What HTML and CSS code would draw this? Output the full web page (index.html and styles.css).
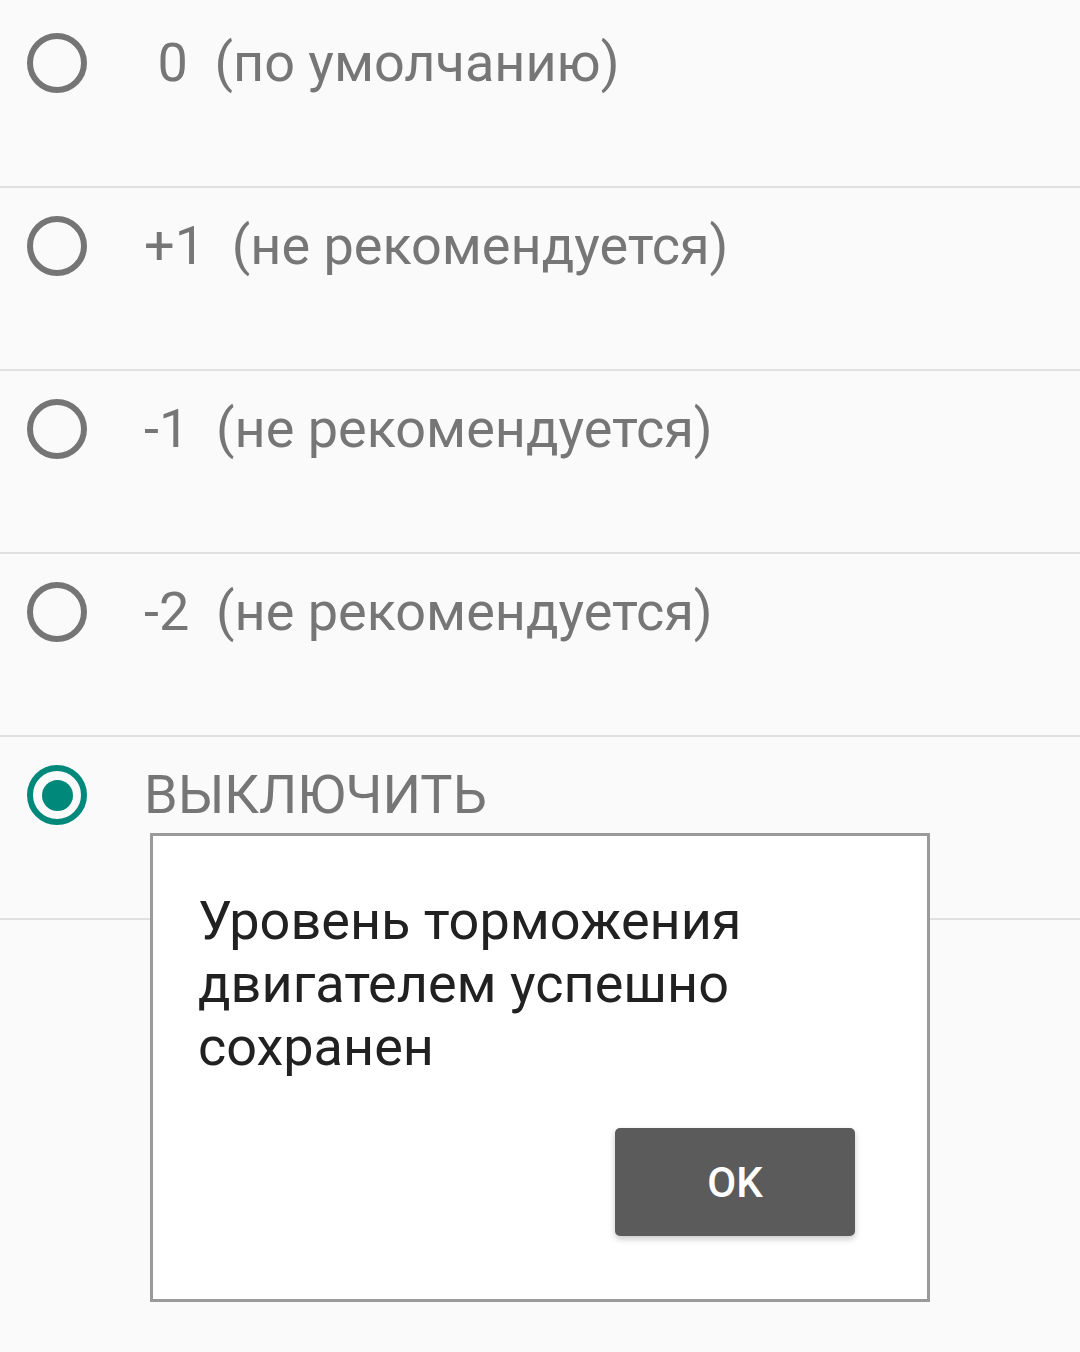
FILE: index.html
```html
<!DOCTYPE html>
<html lang="ru">
<head>
<meta charset="utf-8">
<link rel="stylesheet" href="styles.css">
</head>
<body>
<ul class="options">
  <li class="option">
    <span class="radio"></span>
    <span class="label"> 0  (по умолчанию)</span>
  </li>
  <li class="option">
    <span class="radio"></span>
    <span class="label">+1  (не рекомендуется)</span>
  </li>
  <li class="option">
    <span class="radio"></span>
    <span class="label">-1  (не рекомендуется)</span>
  </li>
  <li class="option">
    <span class="radio"></span>
    <span class="label">-2  (не рекомендуется)</span>
  </li>
  <li class="option">
    <span class="radio radio-checked"></span>
    <span class="label">ВЫКЛЮЧИТЬ</span>
  </li>
</ul>
<div class="dialog">
  <p class="message">Уровень торможения двигателем успешно сохранен</p>
  <div class="actions">
    <button class="ok">OK</button>
  </div>
</div>
</body>
</html>
```
FILE: styles.css
```css
html, body {
  margin: 0;
  padding: 0;
  background: #fafafa;
  font-family: Roboto, "Noto Sans", sans-serif;
}
body {
  width: 1080px;
  height: 1352px;
  overflow: hidden;
  position: relative;
  padding-top: 5px;
  box-sizing: border-box;
}
.options {
  list-style: none;
  margin: 0;
  padding: 0;
}
.option {
  height: 181px;
  box-sizing: content-box;
  border-bottom: 2px solid #e0e0e0;
  display: flex;
  align-items: flex-start;
  padding: 0;
}
.radio {
  flex: none;
  width: 60px;
  height: 60px;
  margin: 28px 0 0 27px;
  box-sizing: border-box;
  border: 6px solid #757575;
  border-radius: 50%;
  display: flex;
  align-items: center;
  justify-content: center;
}
.radio-checked {
  border-color: #00897b;
}
.radio-checked::after {
  content: "";
  width: 31px;
  height: 31px;
  border-radius: 50%;
  background: #00897b;
}
.label {
  margin: 28px 0 0 57px;
  font-size: 54px;
  line-height: 60px;
  color: #767676;
  white-space: pre;
}
.dialog {
  position: absolute;
  left: 150px;
  top: 833px;
  width: 780px;
  height: 469px;
  box-sizing: border-box;
  background: #ffffff;
  border: 3px solid #9a9a9a;
  padding: 53px 72px 0 45px;
}
.message {
  margin: 0;
  font-size: 54px;
  line-height: 63px;
  color: #212121;
}
.actions {
  display: flex;
  justify-content: flex-end;
  margin-top: 50px;
}
.ok {
  width: 240px;
  height: 108px;
  border: none;
  border-radius: 5px;
  background: #5b5b5c;
  color: #ffffff;
  font-family: Roboto, "Noto Sans", sans-serif;
  font-weight: 500;
  font-size: 42px;
  padding: 0;
  box-shadow: 0 3px 6px rgba(0, 0, 0, 0.22);
}
```
